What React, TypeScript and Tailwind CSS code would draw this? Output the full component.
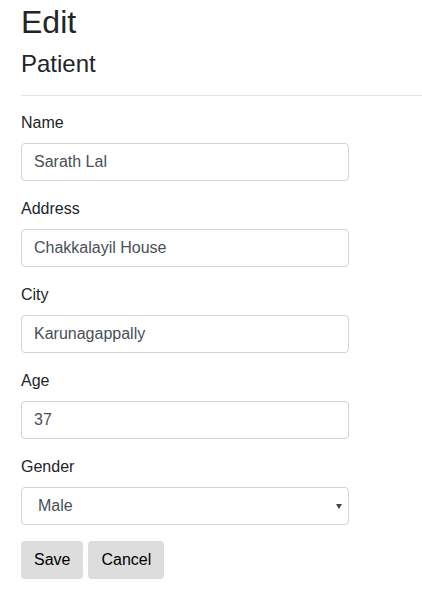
import { useState } from "react";

const fields = [
    { label: "Name", name: "Name", value: "Sarath Lal" },
    { label: "Address", name: "Address", value: "Chakkalayil House" },
    { label: "City", name: "City", value: "Karunagappally" },
    { label: "Age", name: "Age", value: "37" },
];

export default function App() {
    const [values, setValues] = useState<Record<string, string>>(
        Object.fromEntries(fields.map((f) => [f.name, f.value]))
    );
    const [gender, setGender] = useState("Male");

    return (
        <div className="min-h-screen bg-white pl-[21px] pt-[3px] text-[#212529] font-['Liberation_Sans',Arial,sans-serif]">
            <h2 className="text-[32px] leading-[38px] font-normal mb-2">Edit</h2>
            <h4 className="text-[24px] leading-[29px] font-normal">Patient</h4>
            <hr className="mt-[17px] border-0 border-t border-[#e5e5e5]" />

            <form className="w-[328px] pt-[15px]">
                {fields.map((f) => (
                    <div key={f.name} className="mb-4">
                        <label className="block text-base leading-6 mb-2">{f.label}</label>
                        <input
                            name={f.name}
                            type="text"
                            value={values[f.name]}
                            onChange={(e) => setValues({ ...values, [f.name]: e.target.value })}
                            className="block w-full h-[38px] px-3 text-base leading-6 text-[#495057] bg-white border border-[#ced4da] rounded outline-none"
                        />
                    </div>
                ))}

                <div className="mb-4">
                    <label className="block text-base leading-6 mb-2">Gender</label>
                    <div className="relative">
                        <select
                            name="Gender"
                            value={gender}
                            onChange={(e) => setGender(e.target.value)}
                            className="block w-full h-[38px] pl-4 pr-6 text-base text-[#495057] bg-white border border-[#ced4da] rounded outline-none appearance-none"
                        >
                            <option>Male</option>
                            <option>Female</option>
                        </select>
                        <svg
                            width="6"
                            height="5"
                            viewBox="0 0 6 5"
                            className="absolute right-[7px] top-[17px] pointer-events-none"
                        >
                            <path d="M0 0 L6 0 L3 5 Z" fill="#444" />
                        </svg>
                    </div>
                </div>

                <div className="flex gap-[5px]">
                    <button type="submit" className="h-[38px] px-[13px] text-base leading-6 text-black bg-[#dddddd] rounded">
                        Save
                    </button>
                    <button type="button" className="h-[38px] px-[13px] text-base leading-6 text-black bg-[#dddddd] rounded">
                        Cancel
                    </button>
                </div>
            </form>
        </div>
    );
}
